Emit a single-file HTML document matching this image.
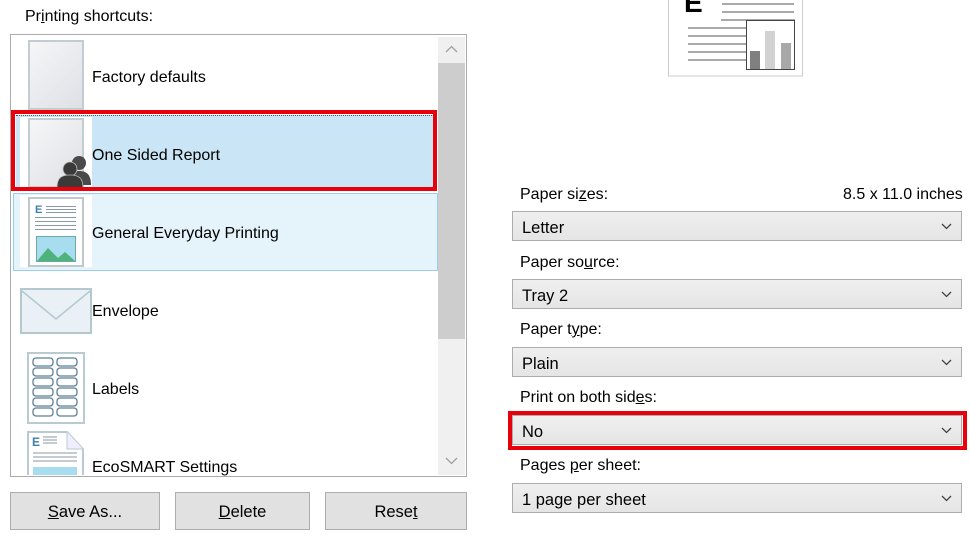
<!DOCTYPE html>
<html><head><style>
*{margin:0;padding:0;box-sizing:border-box}
body{width:970px;height:536px;background:#fff;position:relative;overflow:hidden;font-family:"Liberation Sans",sans-serif;font-size:16px;color:#000}
.a{position:absolute}
.lbl{position:absolute;white-space:nowrap}
.combo{position:absolute;left:512px;width:450px;height:30px;border:1px solid #acacac;background:linear-gradient(#efefef,#e5e5e5);padding:7px 0 0 9px;font-size:16.5px}
.combo svg{position:absolute;right:9px;top:11px}
.btn{position:absolute;top:492px;height:38px;border:1px solid #adadad;background:#e1e1e1;text-align:center;line-height:38px;font-size:16.5px}
.page{position:absolute;left:28px;width:56px;height:70px;border:2px solid #c3ccd0;background:linear-gradient(135deg,#f6f6f8,#dde0e5)}
.ic{position:absolute;left:20px;width:72px;background:#fff}
</style></head><body>
<div class="lbl" style="left:25px;top:8px">Pr<u>i</u>nting shortcuts:</div>
<div class="a" style="left:10px;top:34px;width:457px;height:443px;border:1px solid #ababab;overflow:hidden">
 <div class="a" style="left:427px;top:2px;width:27px;height:438px;background:#f0f0f0"></div>
 <div class="a" style="left:427px;top:28px;width:27px;height:276px;background:#cdcdcd"></div>
 <svg class="a" style="left:434px;top:10px" width="13" height="8"><path d="M1 7L6.5 1.5L12 7" stroke="#a0a0a0" fill="none" stroke-width="1.3"/></svg>
 <svg class="a" style="left:434px;top:422px" width="13" height="8"><path d="M1 1L6.5 6.5L12 1" stroke="#a0a0a0" fill="none" stroke-width="1.3"/></svg>
 <div class="a" style="left:5px;top:80px;width:420px;height:74px;background:#cae5f5;border-top:1px dotted #555"></div>
 <div class="a" style="left:2px;top:158px;width:425px;height:78px;background:#e5f3fb;border:1px solid #99cfee"></div>
</div>
<div class="ic" style="top:38px;height:72px"></div>
<div class="page" style="top:40px"></div>
<div class="lbl" style="left:92px;top:69px">Factory defaults</div>
<div class="ic" style="top:117px;height:72px"></div>
<div class="page" style="top:118px"></div>
<svg class="a" style="left:56px;top:154px" width="36" height="34"><circle cx="23" cy="9" r="7" fill="#4a4a4a"/><path d="M11 31c0-10 4-14 12-14s12 4 12 14z" fill="#4a4a4a"/><circle cx="14" cy="15" r="7" fill="#3a3a3a" stroke="#bbb" stroke-width=".8"/><path d="M1 34c0-10 4-13 13-13s13 3 13 13z" fill="#3a3a3a" stroke="#bbb" stroke-width=".8"/></svg>
<div class="lbl" style="left:92px;top:147px">One Sided Report</div>
<div class="ic" style="top:195px;height:72px"></div>
<div class="a" style="left:28px;top:197px;width:56px;height:70px;border:2px solid #bfc8cc;background:#fff">
 <div class="a" style="left:5px;top:5px;font:bold 11px 'Liberation Sans';color:#3f7fa8">E</div>
 <div class="a" style="left:16px;top:7px;width:30px;height:1px;background:#8a9aa4;box-shadow:0 3px #8a9aa4,0 6px #8a9aa4"></div>
 <div class="a" style="left:5px;top:18px;width:41px;height:1px;background:#8a9aa4;box-shadow:0 4px #8a9aa4,0 8px #8a9aa4,0 12px #8a9aa4"></div>
 <svg class="a" style="left:6px;top:37px" width="40" height="26"><rect x=".5" y=".5" width="39" height="25" fill="#a8dcef" stroke="#6aa"/><path d="M1 25L12 12L22 22L29 16L39 25z" fill="#4db37a"/></svg>
</div>
<div class="lbl" style="left:92px;top:225px">General Everyday Printing</div>
<svg class="a" style="left:20px;top:288px" width="72" height="46"><rect x="1" y="1" width="70" height="44" fill="#e9f1f6" stroke="#b4c8d0" stroke-width="2"/><path d="M2 3L36 31L70 3" fill="none" stroke="#b4c8d0" stroke-width="1.5"/></svg>
<div class="lbl" style="left:92px;top:303px">Envelope</div>
<svg class="a" style="left:27px;top:352px" width="58" height="72"><rect x="1" y="1" width="56" height="70" fill="#fff" stroke="#b8cad2" stroke-width="2"/><g fill="none" stroke="#5e7f95" stroke-width="1.3"><rect x="6" y="6" width="20" height="8" rx="3"/><rect x="6" y="16" width="20" height="8" rx="3"/><rect x="6" y="26" width="20" height="8" rx="3"/><rect x="6" y="36" width="20" height="8" rx="3"/><rect x="6" y="46" width="20" height="8" rx="3"/><rect x="6" y="56" width="20" height="8" rx="3"/><rect x="30" y="6" width="20" height="8" rx="3"/><rect x="30" y="16" width="20" height="8" rx="3"/><rect x="30" y="26" width="20" height="8" rx="3"/><rect x="30" y="36" width="20" height="8" rx="3"/><rect x="30" y="46" width="20" height="8" rx="3"/><rect x="30" y="56" width="20" height="8" rx="3"/></g></svg>
<div class="lbl" style="left:92px;top:381px">Labels</div>
<svg class="a" style="left:27px;top:431px" width="58" height="44"><path d="M1 44V1H40L56 18V44" fill="#fff" stroke="#b8cad2" stroke-width="2"/><path d="M40 1V18H56" fill="#eef" stroke="#b8cad2"/><text x="5" y="15" font-family="Liberation Sans" font-weight="bold" font-size="12" fill="#3f7fa8">E</text><g stroke="#8a9aa4"><path d="M16 6h14M16 9h14M16 12h14M6 22h44M6 26h44M6 30h44"/></g><rect x="6" y="36" width="44" height="10" fill="#a8dcef"/></svg>
<div class="lbl" style="left:92px;top:459px">EcoSMART Settings</div>
<div class="a" style="left:11px;top:477px;width:455px;height:15px;background:#fff"></div>
<div class="a" style="left:10px;top:476px;width:457px;height:1px;background:#ababab"></div>
<div class="a" style="left:11px;top:110px;width:426px;height:81px;border:4px solid #e8000b"></div>
<div class="btn" style="left:10px;width:150px"><u>S</u>ave As...</div>
<div class="btn" style="left:175px;width:135px"><u>D</u>elete</div>
<div class="btn" style="left:325px;width:142px">Rese<u>t</u></div>
<svg class="a" style="left:668px;top:0" width="135" height="78"><rect x=".5" y="-2" width="134" height="78" fill="#fff" stroke="#ccc"/><text x="16" y="12" font-family="Liberation Sans" font-weight="bold" font-size="28">E</text><g stroke="#555"><path d="M54 4h72M54 12h72M53 20h74M20 28h70M20 36h70M20 44h70M20 52h70M20 60h70"/></g><rect x="78.5" y="20.5" width="48" height="49" fill="#fff" stroke="#444"/><rect x="82" y="51" width="10" height="18" fill="#808080"/><rect x="97" y="31" width="10" height="38" fill="#d2d2d2"/><rect x="113" y="43" width="10" height="26" fill="#a8a8a8"/></svg>
<div class="lbl" style="left:520px;top:186px">Paper si<u>z</u>es:</div>
<div class="lbl" style="left:843px;top:186px;width:119px;text-align:right">8.5 x 11.0 inches</div>
<div class="combo" style="top:211px">Letter<svg width="11" height="7"><path d="M1 1L5.5 5.5L10 1" stroke="#444" fill="none" stroke-width="1.3"/></svg></div>
<div class="lbl" style="left:520px;top:254px">Paper so<u>u</u>rce:</div>
<div class="combo" style="top:279px">Tray 2<svg width="11" height="7"><path d="M1 1L5.5 5.5L10 1" stroke="#444" fill="none" stroke-width="1.3"/></svg></div>
<div class="lbl" style="left:520px;top:321px">Paper t<u>y</u>pe:</div>
<div class="combo" style="top:347px">Plain<svg width="11" height="7"><path d="M1 1L5.5 5.5L10 1" stroke="#444" fill="none" stroke-width="1.3"/></svg></div>
<div class="lbl" style="left:520px;top:389px">Print on both sid<u>e</u>s:</div>
<div class="combo" style="top:415px">No<svg width="11" height="7"><path d="M1 1L5.5 5.5L10 1" stroke="#444" fill="none" stroke-width="1.3"/></svg></div>
<div class="a" style="left:508px;top:411px;width:459px;height:39px;border:4px solid #e8000b"></div>
<div class="lbl" style="left:520px;top:457px">Pages <u>p</u>er sheet:</div>
<div class="combo" style="top:483px">1 page per sheet<svg width="11" height="7"><path d="M1 1L5.5 5.5L10 1" stroke="#444" fill="none" stroke-width="1.3"/></svg></div>
</body></html>
